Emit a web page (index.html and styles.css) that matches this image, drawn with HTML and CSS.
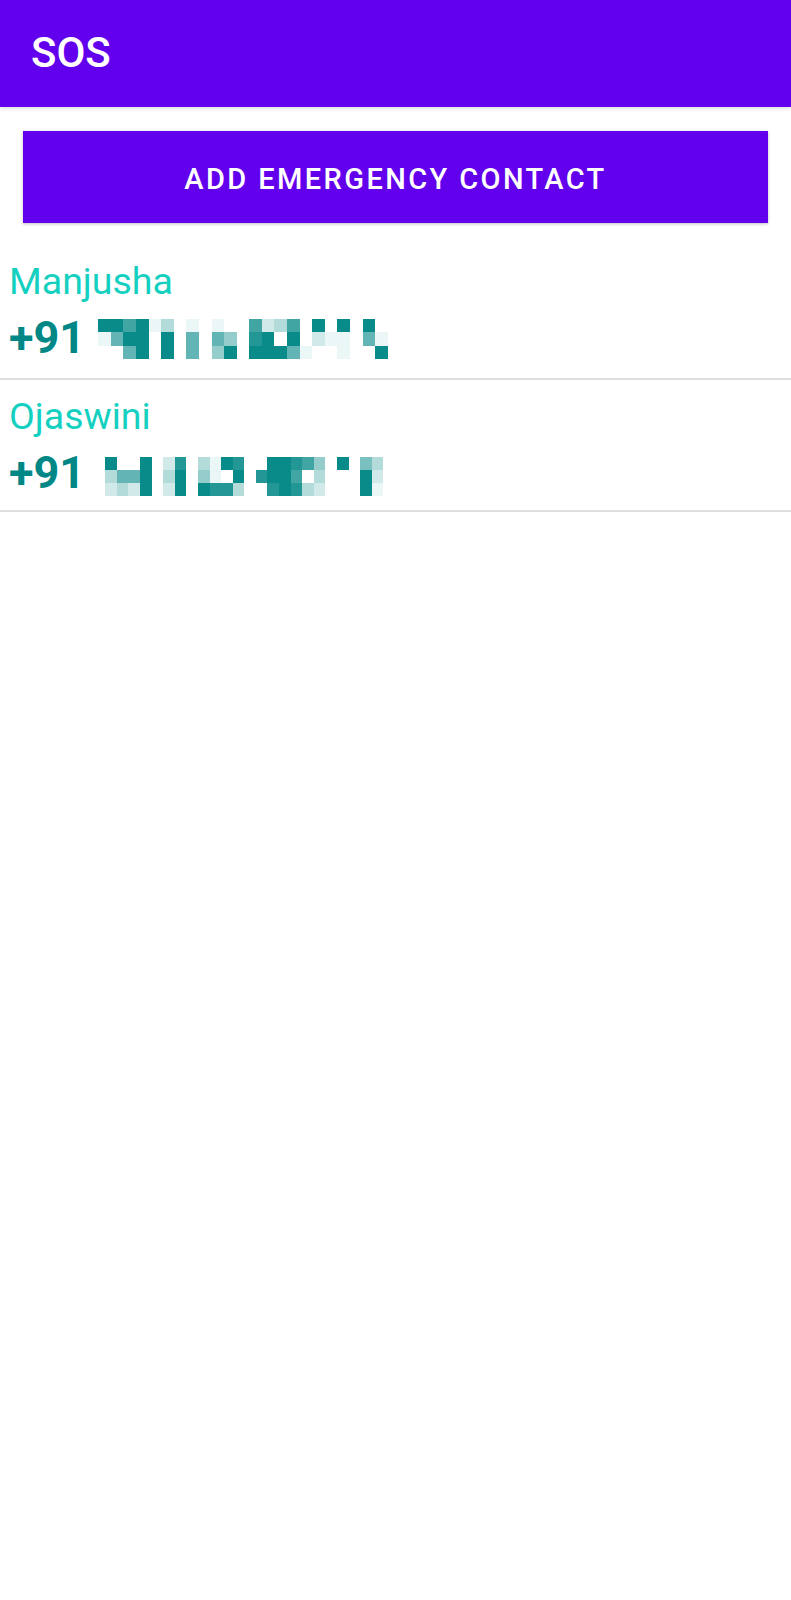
FILE: index.html
```html
<!DOCTYPE html>
<html>
<head>
<meta charset="utf-8">
<link rel="stylesheet" href="styles.css">
</head>
<body>
<header class="appbar"><span class="title">SOS</span></header>
<div class="actions"><button class="add-btn">ADD EMERGENCY CONTACT</button></div>
<ul class="contacts">
  <li class="contact">
    <div class="name">Manjusha</div>
    <div class="phone"><span class="code">+91</span>
      <span class="mosaic" aria-label="hidden number">
        <i class="o9"></i><i class="o9"></i><i class="o7"></i><i class="o9"></i><i class="o1"></i><i class="o3"></i><i></i><i class="o1"></i><i></i><i class="o1"></i><i></i><i></i><i class="o7"></i><i class="o2"></i><i class="o3"></i><i class="o7"></i><i></i><i class="o9"></i><i></i><i class="o9"></i><i></i><i class="o9"></i><i></i>
        <i class="o1"></i><i class="o6"></i><i class="o9"></i><i class="o9"></i><i></i><i class="o9"></i><i></i><i class="o6"></i><i></i><i class="o6"></i><i class="o4"></i><i></i><i class="o8"></i><i class="o9"></i><i></i><i class="o9"></i><i></i><i class="o2"></i><i class="o1"></i><i class="o1"></i><i></i><i class="o6"></i><i class="o1"></i>
        <i></i><i></i><i class="o6"></i><i class="o9"></i><i></i><i class="o9"></i><i></i><i class="o6"></i><i></i><i class="o4"></i><i class="o9"></i><i></i><i class="o9"></i><i class="o9"></i><i class="o9"></i><i class="o6"></i><i class="o1"></i><i></i><i></i><i class="o1"></i><i></i><i></i><i class="o9"></i>
      </span>
    </div>
  </li>
  <li class="contact">
    <div class="name">Ojaswini</div>
    <div class="phone"><span class="code">+91</span>
      <span class="mosaic m2" aria-label="hidden number">
        <i class="o9"></i><i></i><i></i><i class="o9"></i><i></i><i class="o2"></i><i class="o8"></i><i></i><i class="o3"></i><i class="o1"></i><i class="o9"></i><i class="o8"></i><i></i><i></i><i class="o9"></i><i class="o9"></i><i class="o8"></i><i class="o7"></i><i class="o4"></i><i></i><i class="o9"></i><i></i><i class="o5"></i><i class="o3"></i>
        <i class="o3"></i><i class="o6"></i><i class="o6"></i><i class="o9"></i><i></i><i class="o3"></i><i class="o9"></i><i></i><i class="o4"></i><i class="o1"></i><i></i><i class="o9"></i><i></i><i class="o8"></i><i class="o9"></i><i class="o9"></i><i class="o7"></i><i></i><i class="o3"></i><i></i><i></i><i></i><i class="o9"></i><i class="o2"></i>
        <i class="o2"></i><i class="o3"></i><i class="o2"></i><i class="o9"></i><i></i><i class="o2"></i><i class="o9"></i><i></i><i class="o9"></i><i class="o8"></i><i class="o8"></i><i class="o3"></i><i></i><i></i><i class="o8"></i><i class="o9"></i><i class="o8"></i><i class="o3"></i><i class="o2"></i><i></i><i></i><i></i><i class="o9"></i><i class="o1"></i>
      </span>
    </div>
  </li>
</ul>
</body>
</html>
```
FILE: styles.css
```css
* { box-sizing: border-box; }
html, body { margin: 0; padding: 0; background: #ffffff; }
body { font-family: Roboto, "Noto Sans", "Liberation Sans", sans-serif; width: 791px; }

.appbar {
  height: 107px;
  background: #6200ee;
  display: flex;
  align-items: center;
  padding-left: 31px;
  box-shadow: 0 2px 4px rgba(0,0,0,0.12);
}
.title {
  color: #ffffff;
  font-size: 42px;
  font-weight: 500;
  line-height: 1;
  margin-top: -2px;
}

.actions { padding: 24px 23px 0 23px; }
.add-btn {
  display: block;
  width: 100%;
  height: 92px;
  border: 0;
  background: #6200ee;
  color: #ffffff;
  font-family: Roboto, "Noto Sans", "Liberation Sans", sans-serif;
  font-size: 29px;
  font-weight: 500;
  letter-spacing: 2.4px;
  box-shadow: 0 1px 3px rgba(0,0,0,0.25);
  padding: 4px 0 0 0;
}

.contacts { list-style: none; margin: 0; padding: 0; margin-top: 22px; }
.contact {
  padding: 14px 0 15px 9px;
  border-bottom: 2px solid #dedede;
}
.contact + .contact { padding-top: 14px; padding-bottom: 12px; }
.name {
  color: #14d0c0;
  font-size: 37.5px;
  line-height: 44px;
}
.phone {
  display: flex;
  align-items: center;
  gap: 13px;
  margin-top: 10px;
}
.code {
  color: #018786;
  font-size: 45px;
  font-weight: 700;
  line-height: 50px;
}
.mosaic {
  display: grid;
  grid-template-columns: repeat(23, 12.6px);
  grid-auto-rows: 13.2px;
  filter: blur(0.6px);
  margin-top: 2px;
}
.mosaic.m2 { grid-template-columns: repeat(24, 11.6px); margin-left: 7px; margin-top: 7px; }
.mosaic i { display: block; background: #018786; opacity: 0; }
.mosaic i.o1 { opacity: 0.08; }
.mosaic i.o2 { opacity: 0.18; }
.mosaic i.o3 { opacity: 0.3; }
.mosaic i.o4 { opacity: 0.42; }
.mosaic i.o5 { opacity: 0.52; }
.mosaic i.o6 { opacity: 0.62; }
.mosaic i.o7 { opacity: 0.75; }
.mosaic i.o8 { opacity: 0.87; }
.mosaic i.o9 { opacity: 0.97; }
```
